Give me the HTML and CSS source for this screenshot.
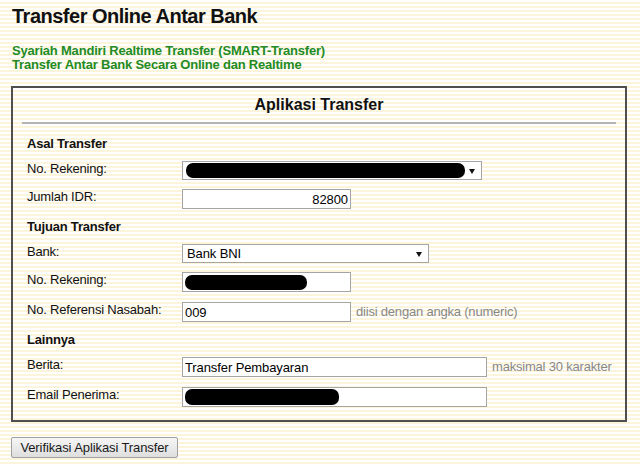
FILE: index.html
```html
<!DOCTYPE html>
<html lang="id">
<head>
<meta charset="utf-8">
<title>Transfer Online Antar Bank</title>
<link rel="stylesheet" href="styles.css">
</head>
<body>
<h1 class="page-title">Transfer Online Antar Bank</h1>
<div class="subtitle">Syariah Mandiri Realtime Transfer (SMART-Transfer)<br>Transfer Antar Bank Secara Online dan Realtime</div>
<div class="panel">
  <div class="panel-title">Aplikasi Transfer</div>
  <div class="divider"></div>
  <div class="form">
    <div class="section">Asal Transfer</div>
    <div class="row row-sel">
      <div class="label">No. Rekening:</div>
      <div class="select sel-wide"><span class="redact redact-acc"></span><span class="arrow"></span></div>
    </div>
    <div class="row">
      <div class="label">Jumlah IDR:</div>
      <div class="field field-short field-right">82800</div>
    </div>
    <div class="section">Tujuan Transfer</div>
    <div class="row row-sel">
      <div class="label">Bank:</div>
      <div class="select sel-bank"><span class="sel-text">Bank BNI</span><span class="arrow"></span></div>
    </div>
    <div class="row">
      <div class="label">No. Rekening:</div>
      <div class="field field-short"><span class="redact redact-rek"></span></div>
    </div>
    <div class="row">
      <div class="label">No. Referensi Nasabah:</div>
      <div class="field field-short">009</div>
      <div class="hint">diisi dengan angka (numeric)</div>
    </div>
    <div class="section">Lainnya</div>
    <div class="row">
      <div class="label">Berita:</div>
      <div class="field field-long">Transfer Pembayaran</div>
      <div class="hint">maksimal 30 karakter</div>
    </div>
    <div class="row">
      <div class="label">Email Penerima:</div>
      <div class="field field-long"><span class="redact redact-mail"></span></div>
    </div>
  </div>
</div>
<button class="btn" type="button">Verifikasi Aplikasi Transfer</button>
</body>
</html>
```
FILE: styles.css
```css
html, body {
  height: 100%;
}
body {
  margin: 0;
  padding: 0 12px 0 11px;
  background: repeating-linear-gradient(to bottom, #ffffff 0, #ffffff 2px, #fdf4dc 2px, #fdf4dc 4px);
  font-family: "Liberation Sans", Arial, sans-serif;
  color: #111;
}
.page-title {
  margin: 0;
  padding: 4px 0 0 1px;
  font-size: 20px;
  line-height: 24px;
  font-weight: bold;
  letter-spacing: -0.5px;
}
.subtitle {
  margin-top: 16px;
  padding-left: 1px;
  font-size: 13px;
  line-height: 14px;
  font-weight: bold;
  letter-spacing: -0.2px;
  color: #238b23;
}
.panel {
  margin-top: 14px;
  width: 612px;
  border: 2px solid #4f4f4f;
}
.panel-title {
  padding-top: 7px;
  text-align: center;
  font-size: 16px;
  line-height: 20px;
  font-weight: bold;
}
.divider {
  height: 2px;
  margin: 7px 9px 0;
  background: #b4b4b4;
}
.form {
  display: flex;
  flex-direction: column;
  gap: 10px;
  padding: 12px 14px 13px;
}
.section {
  font-size: 13px;
  line-height: 15px;
  font-weight: bold;
  letter-spacing: -0.2px;
}
.row {
  display: flex;
  align-items: flex-start;
  height: 20px;
}
.row-sel {
  height: 18px;
}
.label {
  width: 155px;
  flex: none;
  font-size: 13px;
  line-height: 15px;
  letter-spacing: -0.2px;
}
.field {
  box-sizing: border-box;
  height: 20px;
  flex: none;
  display: flex;
  align-items: center;
  padding: 0 2px;
  border: 1px solid #a5a5a5;
  background: #fff;
  font-size: 13px;
  letter-spacing: -0.1px;
  color: #000;
}
.field-short { width: 169px; }
.field-long { width: 305px; }
.field-right { justify-content: flex-end; }
.select {
  box-sizing: border-box;
  height: 19px;
  flex: none;
  display: flex;
  align-items: center;
  justify-content: space-between;
  padding: 0 6px 0 3px;
  border: 1px solid #a5a5a5;
  background: #fff;
  font-size: 13px;
  letter-spacing: -0.1px;
  color: #000;
}
.sel-wide { width: 300px; }
.sel-bank { width: 247px; padding-left: 4px; }
.arrow {
  width: 0;
  height: 0;
  border-left: 3px solid transparent;
  border-right: 3px solid transparent;
  border-top: 5px solid #111;
  margin-top: 1px;
}
.redact {
  display: block;
  background: #000;
  border-radius: 7px;
}
.redact-acc { width: 279px; height: 15px; }
.redact-rek { width: 122px; height: 15px; }
.redact-mail { width: 154px; height: 16px; }
.hint {
  margin-left: 5px;
  font-size: 13px;
  line-height: 20px;
  letter-spacing: -0.2px;
  white-space: nowrap;
  color: #888;
}
.btn {
  display: block;
  margin-top: 15px;
  height: 21px;
  width: 167px;
  padding: 0;
  border: 1px solid #a0a0a0;
  border-radius: 2px;
  background: linear-gradient(to bottom, #f6f6f6, #dedede);
  font-family: "Liberation Sans", Arial, sans-serif;
  font-size: 13px;
  letter-spacing: -0.1px;
  color: #1a1a1a;
}
```
